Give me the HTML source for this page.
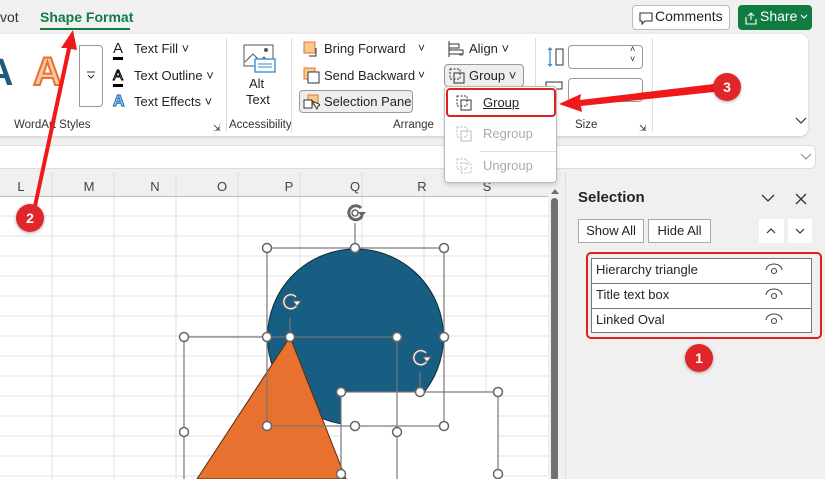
<!DOCTYPE html>
<html><head><meta charset="utf-8"><style>
*{margin:0;padding:0;box-sizing:border-box}
body{width:825px;height:479px;overflow:hidden;background:#f0f0f0;font-family:"Segoe UI","Liberation Sans",sans-serif;position:relative;color:#242424}
.a{position:absolute;white-space:nowrap}
.t{font-size:13px}
.lbl{font-size:11.5px;color:#333}
</style></head><body>
<!-- top bar -->
<div class="a" style="left:0;top:9px;font-size:14px;color:#333">vot</div>
<div class="a" style="left:40px;top:9px;font-size:14px;color:#107c41;font-weight:bold">Shape Format</div>
<div class="a" style="left:40px;top:28px;width:90px;height:2px;background:#107c41"></div>
<div class="a" style="left:632px;top:5px;width:98px;height:25px;border:1px solid #bbb;border-radius:4px;background:#fff"></div>
<svg class="a" style="left:638px;top:10px" width="16" height="16"><path d="M2 3h12v8H7l-3 3v-3H2z" fill="none" stroke="#333" stroke-width="1.1"/></svg>
<div class="a" style="left:655px;top:8px;font-size:14px">Comments</div>
<div class="a" style="left:738px;top:5px;width:74px;height:25px;border-radius:4px;background:#107c41"></div>
<svg class="a" style="left:743px;top:10px" width="16" height="16"><path d="M3 7v7h10V9M8 10V4M5 6l3-3 3 3" fill="none" stroke="#fff" stroke-width="1.1"/></svg>
<div class="a" style="left:760px;top:8px;font-size:14px;color:#fff">Share</div>
<svg class="a" style="left:800px;top:14px" width="8" height="6"><path d="M1 1l3 3 3-3" fill="none" stroke="#fff" stroke-width="1.2"/></svg>

<!-- ribbon -->
<div class="a" style="left:-10px;top:34px;width:818px;height:102px;background:#fff;border-radius:8px;box-shadow:0 1px 3px rgba(0,0,0,.15)"></div>
<div class="a" style="left:-14px;top:52px;font-size:38px;color:#1d5c7a;font-weight:bold">A</div>
<div class="a" style="left:33px;top:50px;font-size:40px;color:#f7c6a6;font-weight:bold;-webkit-text-stroke:2px #e8712f">A</div>
<div class="a" style="left:79px;top:45px;width:24px;height:62px;border:1px solid #999;border-radius:0 4px 4px 0"></div>
<svg class="a" style="left:85px;top:70px" width="12" height="10"><path d="M2 2h8M3 5l3 3 3-3" fill="none" stroke="#333"/></svg>
<div class="a" style="left:113px;top:40px;font-size:15px;line-height:17px;border-bottom:3px solid #000">A</div>
<div class="a t" style="left:134px;top:41px">Text Fill ˅</div>
<div class="a" style="left:113px;top:67px;font-size:15px;line-height:17px;border-bottom:3px solid #000;color:#fff;-webkit-text-stroke:1px #000">A</div>
<div class="a t" style="left:134px;top:68px">Text Outline ˅</div>
<div class="a" style="left:113px;top:93px;font-size:16px;color:#bfe0f7;-webkit-text-stroke:1.2px #2a7bc2;font-weight:bold">A</div>
<div class="a t" style="left:134px;top:94px">Text Effects ˅</div>
<div class="a lbl" style="left:14px;top:119px">WordArt Styles</div>
<div class="a" style="left:213px;top:123px;font-size:9px">⇲</div>
<div class="a" style="left:226px;top:38px;width:1px;height:94px;background:#ddd"></div>
<svg class="a" style="left:243px;top:44px" width="34" height="30"><rect x="1" y="1" width="29" height="21" fill="#fff" stroke="#555"/><path d="M2 18l8-8 7 7 4-4 8 8" fill="none" stroke="#555"/><circle cx="23" cy="6" r="2" fill="#555"/><rect x="12" y="15" width="20" height="13" fill="#fff" stroke="#2a8ad4" stroke-width="1.3"/><path d="M15 20h14M15 23h14" stroke="#2a8ad4"/></svg>
<div class="a t" style="left:249px;top:76px">Alt</div>
<div class="a t" style="left:246px;top:92px">Text</div>
<div class="a lbl" style="left:229px;top:119px">Accessibility</div>
<div class="a" style="left:291px;top:38px;width:1px;height:94px;background:#ddd"></div>
<svg class="a" style="left:302px;top:40px" width="18" height="18"><rect x="2" y="2" width="11" height="11" fill="#f9c98f" stroke="#e8712f"/><path d="M14 8v8H7" fill="none" stroke="#333"/></svg>
<div class="a t" style="left:324px;top:41px">Bring Forward</div>
<div class="a" style="left:418px;top:41px;font-size:12px">˅</div>
<svg class="a" style="left:302px;top:66px" width="18" height="18"><rect x="2" y="2" width="11" height="11" fill="#f9c98f" stroke="#e8712f"/><rect x="6" y="6" width="11" height="11" fill="#fff" stroke="#333"/></svg>
<div class="a t" style="left:324px;top:68px">Send Backward</div>
<div class="a" style="left:418px;top:68px;font-size:12px">˅</div>
<div class="a" style="left:299px;top:90px;width:114px;height:23px;border:1px solid #999;border-radius:4px;background:#eee"></div>
<svg class="a" style="left:302px;top:93px" width="18" height="18"><rect x="6" y="2" width="10" height="10" fill="#f9c98f" stroke="#e8712f"/><rect x="2" y="7" width="8" height="8" fill="#fff" stroke="#333"/><path d="M10 8l5 8 1-3 3-1z" fill="#fff" stroke="#333"/></svg>
<div class="a t" style="left:324px;top:94px">Selection Pane</div>
<div class="a lbl" style="left:393px;top:119px">Arrange</div>
<svg class="a" style="left:447px;top:40px" width="18" height="18"><path d="M2 1v16M2 4h10v4H2M2 10h14v4H2" fill="none" stroke="#333"/><path d="M16 15l-4 0" stroke="#2a8ad4"/></svg>
<div class="a t" style="left:469px;top:41px">Align ˅</div>
<div class="a" style="left:444px;top:64px;width:80px;height:23px;border:1px solid #999;border-radius:4px;background:#eee"></div>
<svg class="a" style="left:448px;top:67px" width="18" height="18"><rect x="2" y="2" width="10" height="10" fill="none" stroke="#333" stroke-dasharray="2 1.5"/><rect x="6" y="6" width="10" height="10" fill="none" stroke="#333"/></svg>
<div class="a t" style="left:469px;top:68px">Group ˅</div>
<div class="a" style="left:535px;top:38px;width:1px;height:94px;background:#ddd"></div>
<svg class="a" style="left:546px;top:46px" width="20" height="22"><path d="M4 2v18M2 4l2-2 2 2M2 18l2 2 2-2" fill="none" stroke="#2a8ad4" stroke-width="1.2"/><rect x="10" y="3" width="7" height="16" fill="none" stroke="#333"/></svg>
<div class="a" style="left:568px;top:45px;width:75px;height:24px;border:1px solid #999;border-radius:4px;background:#fff"></div>
<div class="a" style="left:630px;top:44px;font-size:9px;line-height:10px">˄<br>˅</div>
<svg class="a" style="left:544px;top:80px" width="22" height="20"><rect x="2" y="2" width="16" height="7" fill="none" stroke="#333"/></svg>
<div class="a" style="left:568px;top:78px;width:75px;height:24px;border:1px solid #999;border-radius:4px;background:#fff"></div>
<div class="a lbl" style="left:575px;top:119px">Size</div>
<div class="a" style="left:639px;top:123px;font-size:9px">⇲</div>
<div class="a" style="left:652px;top:38px;width:1px;height:94px;background:#ddd"></div>
<svg class="a" style="left:794px;top:116px" width="14" height="10"><path d="M2 2l5 5 5-5" fill="none" stroke="#333" stroke-width="1.2"/></svg>

<!-- formula bar -->
<div class="a" style="left:-5px;top:145px;width:821px;height:24px;background:#fff;border:1px solid #ddd;border-radius:6px"></div>
<svg class="a" style="left:799px;top:152px" width="14" height="10"><path d="M2 2l5 5 5-5" fill="none" stroke="#888" stroke-width="1.1"/></svg>

<!-- grid -->
<svg class="a" style="left:0;top:172px" width="565" height="307">
<rect x="0" y="24" width="548" height="283" fill="#fff"/>
<g stroke="#e1e1e1" stroke-width="1">
<path d="M52 0v307M114 0v307M176 0v307M238 0v307M300 0v307M362 0v307M424 0v307M486 0v307"/>
<path d="M0 44h548M0 64h548M0 84h548M0 104h548M0 124h548M0 144h548M0 164h548M0 184h548M0 204h548M0 224h548M0 244h548M0 264h548M0 284h548M0 304h548"/>
</g>
<path d="M0 24.5h548" stroke="#bbb"/>
<g font-family="Liberation Sans,sans-serif" font-size="13" fill="#444" text-anchor="middle">
<text x="21" y="19">L</text><text x="89" y="19">M</text><text x="155" y="19">N</text><text x="222" y="19">O</text><text x="289" y="19">P</text><text x="355" y="19">Q</text><text x="422" y="19">R</text><text x="487" y="19">S</text></g>
<rect x="548" y="24" width="14" height="283" fill="#f0f0f0"/>
<rect x="551" y="26" width="7" height="283" rx="3.5" fill="#707070"/>
<path d="M551 22l4-5 4 5z" fill="#707070"/>
</svg>
<!-- shapes -->
<svg class="a" style="left:0;top:0" width="560" height="479">
<circle cx="355.5" cy="337" r="88" fill="#175e82" stroke="#0c2a3a"/>
<rect x="341" y="392" width="157" height="90" fill="#fff"/>
<path d="M290 337L197 479H346Z" fill="#e8712f" stroke="#5a2a10"/>
<g fill="none" stroke="#777" stroke-width="1.2">
<rect x="267" y="248" width="177" height="178"/>
<rect x="184" y="337" width="213" height="150"/>
<rect x="341" y="392" width="157" height="90"/>
<path d="M355 248v-25M290 337v-20M420 392v-20"/>
</g>
<g fill="#fff" stroke="#666" stroke-width="1.5">
<circle cx="267" cy="248" r="4.5"/><circle cx="355" cy="248" r="4.5"/><circle cx="444" cy="248" r="4.5"/>
<circle cx="267" cy="337" r="4.5"/><circle cx="444" cy="337" r="4.5"/>
<circle cx="267" cy="426" r="4.5"/><circle cx="355" cy="426" r="4.5"/><circle cx="444" cy="426" r="4.5"/>
<circle cx="184" cy="337" r="4.5"/><circle cx="290" cy="337" r="4.5"/><circle cx="397" cy="337" r="4.5"/>
<circle cx="184" cy="432" r="4.5"/><circle cx="397" cy="432" r="4.5"/>
<circle cx="341" cy="392" r="4.5"/><circle cx="420" cy="392" r="4.5"/><circle cx="498" cy="392" r="4.5"/>
<circle cx="341" cy="474" r="4.5"/><circle cx="498" cy="474" r="4.5"/>
</g>
<g fill="none" stroke="#666" stroke-width="3">
<path d="M361 208a7 7 0 1 0 1 8"/><path d="M296 297a7 7 0 1 0 1 8"/><path d="M426 353a7 7 0 1 0 1 8"/></g>
<g fill="none" stroke="#fff" stroke-width="1.2"><path d="M296 297a7 7 0 1 0 1 8"/><path d="M426 353a7 7 0 1 0 1 8"/></g>
<g fill="#666"><path d="M358 212l8 0-4 5z"/><path d="M293 301l8 0-4 5z" fill="#fff" stroke="#666"/><path d="M423 357l8 0-4 5z" fill="#fff" stroke="#666"/></g>
<circle cx="355" cy="213" r="3" fill="none" stroke="#666" stroke-width="1.5"/>
</svg>

<!-- group dropdown -->
<div class="a" style="left:444px;top:86px;width:113px;height:97px;background:#fff;border:1px solid #bbb;border-radius:4px;box-shadow:0 2px 4px rgba(0,0,0,.15)"></div>
<div class="a" style="left:446px;top:88px;width:110px;height:29px;border:2px solid #e02020;border-radius:4px"></div>
<svg class="a" style="left:455px;top:94px" width="18" height="18"><rect x="2" y="2" width="10" height="10" fill="none" stroke="#333" stroke-dasharray="2 1.5"/><rect x="6" y="6" width="10" height="10" fill="none" stroke="#333"/></svg>
<div class="a t" style="left:483px;top:95px;text-decoration:underline">Group</div>
<svg class="a" style="left:455px;top:125px" width="18" height="18"><rect x="2" y="2" width="10" height="10" fill="none" stroke="#bbb" stroke-dasharray="2 1.5"/><rect x="6" y="6" width="10" height="10" fill="none" stroke="#bbb"/></svg>
<div class="a t" style="left:483px;top:126px;color:#aaa">Regroup</div>
<div class="a" style="left:480px;top:151px;width:76px;height:1px;background:#ddd"></div>
<svg class="a" style="left:455px;top:157px" width="18" height="18"><rect x="2" y="2" width="10" height="10" fill="none" stroke="#bbb" stroke-dasharray="2 1.5"/><rect x="6" y="6" width="10" height="10" fill="none" stroke="#bbb" stroke-dasharray="2 1.5"/></svg>
<div class="a t" style="left:483px;top:158px;color:#aaa">Ungroup</div>

<!-- selection pane -->
<div class="a" style="left:565px;top:172px;width:260px;height:307px;background:#f0f0f0;border-left:1px solid #ddd"></div>
<div class="a" style="left:578px;top:189px;font-size:15px;font-weight:bold">Selection</div>
<svg class="a" style="left:760px;top:192px" width="50" height="14"><path d="M2 3l6 6 6-6M36 2l10 10M46 2L36 12" fill="none" stroke="#333" stroke-width="1.3"/></svg>
<div class="a t" style="left:578px;top:219px;width:66px;height:24px;border:1px solid #aaa;background:#fff;line-height:22px;text-align:center">Show All</div>
<div class="a t" style="left:648px;top:219px;width:63px;height:24px;border:1px solid #aaa;background:#fff;line-height:22px;text-align:center">Hide All</div>
<div class="a" style="left:759px;top:219px;width:25px;height:24px;background:#fff"></div>
<div class="a" style="left:788px;top:219px;width:24px;height:24px;background:#fff"></div>
<svg class="a" style="left:759px;top:219px" width="54" height="24"><path d="M8 14l4-4 4 4M37 10l4 4 4-4" fill="none" stroke="#333" stroke-width="1.2"/></svg>
<div class="a" style="left:586px;top:252px;width:236px;height:87px;border:2px solid #e02020;border-radius:5px"></div>
<div class="a" style="left:591px;top:258px;width:221px;height:75px;background:#fff;border:1px solid #777"></div>
<div class="a" style="left:591px;top:283px;width:221px;height:1px;background:#777"></div>
<div class="a" style="left:591px;top:308px;width:221px;height:1px;background:#777"></div>
<div class="a t" style="left:596px;top:262px">Hierarchy triangle</div>
<div class="a t" style="left:596px;top:287px">Title text box</div>
<div class="a t" style="left:596px;top:312px">Linked Oval</div>
<svg class="a" style="left:764px;top:262px" width="20" height="70"><g fill="none" stroke="#444" stroke-width="1.1"><path d="M2 8a8 6 0 0 1 16 0"/><circle cx="10" cy="9" r="2.5"/><path d="M2 33a8 6 0 0 1 16 0"/><circle cx="10" cy="34" r="2.5"/><path d="M2 58a8 6 0 0 1 16 0"/><circle cx="10" cy="59" r="2.5"/></g></svg>

<!-- annotations -->
<svg class="a" style="left:0;top:0" width="825" height="479">
<defs><filter id="s"><feDropShadow dx="0" dy="1" stdDeviation="1.5" flood-opacity=".35"/></filter></defs>
<path d="M33 206L67 48l-6 0 12-18 4 20-6-1L37 206z" fill="#f01818"/>
<path d="M714 84L580 100l1-6-22 10 23 8-1-6L714 92z" fill="#f01818"/>
<g filter="url(#s)"><circle cx="30" cy="218" r="14" fill="#e0262b"/><circle cx="727" cy="87" r="14" fill="#e0262b"/><circle cx="699" cy="358" r="14" fill="#e0262b"/></g>
<g fill="#fff" font-family="Liberation Sans,sans-serif" font-weight="bold" font-size="14" text-anchor="middle"><text x="30" y="223">2</text><text x="727" y="92">3</text><text x="699" y="363">1</text></g>
</svg>
</body></html>
